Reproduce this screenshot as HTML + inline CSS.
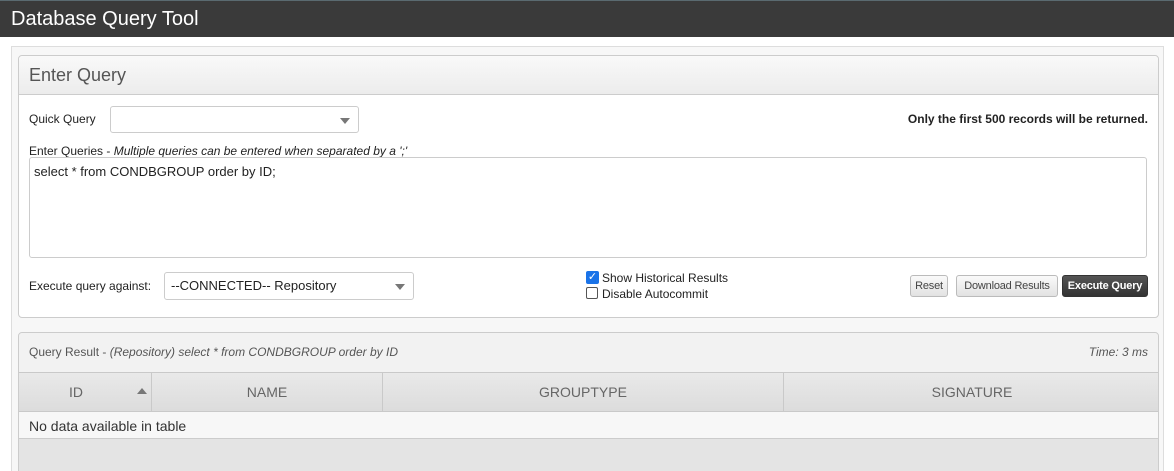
<!DOCTYPE html>
<html style="overflow:hidden;height:471px"><head><style>
*{box-sizing:border-box}
body{margin:0;width:1174px;height:471px;overflow:hidden;background:#fff;font-family:"Liberation Sans",Arial,sans-serif;color:#222;position:relative}
.a{position:absolute}
.top{left:0;top:0;width:1174px;height:37px;background:#3a3a3a;border-top:1px solid #5a6a70;color:#fff;font-size:20px;padding:7px 0 0 11px}
.outer{left:11px;top:46px;width:1153px;height:430px;border:1px solid #ddd;background:#f7f7f7}
.panel{left:18px;top:55px;width:1141px;height:263px;border:1px solid #ccc;border-radius:4px;background:#fff}
.ph{left:0;top:0;width:1139px;height:39px;background:linear-gradient(#f9f9f9,#ececec);border-bottom:1px solid #ccc;border-radius:4px 4px 0 0;font-size:18px;color:#555;padding:9px 0 0 10px}
.sel{border:1px solid #ccc;border-radius:3px;background:#fff;font-size:13px;padding:5px 6px}
.arr{position:absolute;right:8px;top:11px;width:0;height:0;border-left:5px solid transparent;border-right:5px solid transparent;border-top:6px solid #777}
.btn{border:1px solid #bbb;border-radius:3px;background:linear-gradient(#fafafa,#e2e2e2);font-size:11px;color:#444;height:22px;padding:4px 0;text-align:center;white-space:nowrap;letter-spacing:-0.2px}
.cb{width:12px;height:12px;border:1px solid #555;border-radius:2px;background:#fff}
.res{left:18px;top:332px;width:1141px;height:150px;border:1px solid #ccc;border-radius:4px;background:#e4e4e4;overflow:hidden}
.th{top:39px;height:40px;background:linear-gradient(#e9e9e9,#dcdcdc);border-right:1px solid #c9c9c9;border-top:1px solid #c9c9c9;border-bottom:1px solid #c9c9c9;font-size:14px;color:#666;text-align:center;padding-top:11px}
</style></head><body>
<div class="a top">Database Query Tool</div>
<div class="a outer"></div>
<div class="a panel">
 <div class="a ph">Enter Query</div>
 <div class="a" style="left:10px;top:56px;font-size:12px">Quick Query</div>
 <div class="a sel" style="left:91px;top:50px;width:249px;height:27px"><span class="arr"></span></div>
 <div class="a" style="right:10px;top:56px;font-size:12px;font-weight:bold">Only the first 500 records will be returned.</div>
 <div class="a" style="left:10px;top:88px;font-size:12px">Enter Queries - <i>Multiple queries can be entered when separated by a ';'</i></div>
 <div class="a" style="left:10px;top:101px;width:1118px;height:101px;border:1px solid #ccc;border-radius:3px;font-size:13px;padding:6px 4px">select * from CONDBGROUP order by ID;</div>
 <div class="a" style="left:10px;top:223px;font-size:12px">Execute query against:</div>
 <div class="a sel" style="left:145px;top:216px;width:250px;height:28px;font-size:13px">--CONNECTED-- Repository<span class="arr"></span></div>
 <div class="a" style="left:567px;top:215px;width:13px;height:13px;border-radius:2px;background:#1a73e8;color:#fff;font-size:11px;line-height:13px;text-align:center">✓</div>
 <div class="a" style="left:583px;top:215px;font-size:12px">Show Historical Results</div>
 <div class="a cb" style="left:567px;top:231px"></div>
 <div class="a" style="left:583px;top:231px;font-size:12px">Disable Autocommit</div>
 <div class="a btn" style="left:891px;top:219px;width:38px">Reset</div>
 <div class="a btn" style="left:937px;top:219px;width:102px">Download Results</div>
 <div class="a btn" style="left:1043px;top:219px;width:86px;background:linear-gradient(#555,#333);color:#fff;font-weight:bold;border-color:#333">Execute Query</div>
</div>
<div class="a res">
 <div class="a" style="left:0;top:0;width:1141px;height:39px;background:#f2f2f2;font-size:12px;color:#555;padding:12px 10px"><span>Query Result - <i>(Repository) select * from CONDBGROUP order by ID</i></span><i style="float:right;margin-right:2px">Time: 3 ms</i></div>
 <div class="a th" style="left:0;width:133px;padding-right:18px">ID<span style="position:absolute;right:4px;top:15px;border-left:5px solid transparent;border-right:5px solid transparent;border-bottom:6px solid #777"></span></div>
 <div class="a th" style="left:133px;width:231px">NAME</div>
 <div class="a th" style="left:364px;width:401px">GROUPTYPE</div>
 <div class="a th" style="left:765px;width:376px;border-right:none">SIGNATURE</div>
 <div class="a" style="left:0;top:79px;width:1141px;height:27px;background:#f7f7f7;border-bottom:1px solid #ccc;font-size:14px;color:#333;padding:6px 10px">No data available in table</div>
</div>
</body></html>
